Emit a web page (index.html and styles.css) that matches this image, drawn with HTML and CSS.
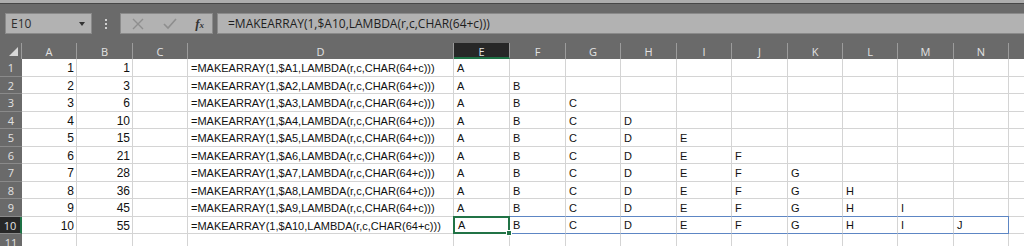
FILE: index.html
```html
<!DOCTYPE html>
<html lang="en">
<head>
  <meta charset="UTF-8" />
  <title>MAKEARRAY sheet</title>
  <link rel="stylesheet" href="styles.css">
</head>
<body>
  <div class="top-strip"></div>
  <div class="formula-bar">
    <div class="name-box">
      <span>E10</span>
      <span class="caret"></span>
    </div>
    <div class="grip"><i></i><i></i><i></i></div>
    <div class="fx-box">
      <svg class="fx-icon" width="14" height="14" viewBox="0 0 14 14">
        <path d="M2 2 L12 12 M12 2 L2 12" stroke="#8e8e8e" stroke-width="1.4" fill="none"/>
      </svg>
      <svg class="fx-icon" width="16" height="14" viewBox="0 0 16 14">
        <path d="M2 7 L6 11 L14 2" stroke="#8e8e8e" stroke-width="1.6" fill="none"/>
      </svg>
      <span class="fx">f<sub>x</sub></span>
    </div>
    <div class="formula-input">=MAKEARRAY(1,$A10,LAMBDA(r,c,CHAR(64+c)))</div>
  </div>
  <div class="sheet" id="sheet"></div>
  <script>
    const sheet = document.getElementById('sheet');
    const cols = ['A', 'B', 'C', 'D', 'E', 'F', 'G', 'H', 'I', 'J', 'K', 'L', 'M', 'N', 'O'];

    function cell(cls, text) {
      const div = document.createElement('div');
      div.className = cls;
      if (text !== undefined) div.textContent = text;
      sheet.appendChild(div);
      return div;
    }

    cell('corner').innerHTML = '<span class="tri"></span>';
    cols.forEach(c => cell(c === 'E' ? 'col-head active' : 'col-head', c === 'O' ? '' : c));

    for (let r = 1; r <= 11; r++) {
      cell(r === 10 ? 'row-head active' : 'row-head', r);
      const total = r * (r + 1) / 2;
      cols.forEach((c, i) => {
        let text = '';
        let cls = 'cell';
        if (r <= 10) {
          if (c === 'A') { text = r; cls += ' num'; }
          if (c === 'B') { text = total; cls += ' num'; }
          if (c === 'D') text = '=MAKEARRAY(1,$A' + r + ',LAMBDA(r,c,CHAR(64+c)))';
          if (i >= 4 && i - 4 < r) text = String.fromCharCode(65 + i - 4);
        }
        if (r === 10 && i >= 5 && i <= 13) cls += ' in-range';
        if (r === 10 && i === 13) cls += ' last';
        const div = cell(cls, text);
        if (r === 10 && c === 'E') {
          div.classList.add('selected');
          div.innerHTML = 'A<span class="handle"></span>';
        }
      });
    }
  </script>
</body>
</html>
```

FILE: styles.css
```css
* {
  margin: 0;
  padding: 0;
  box-sizing: border-box;
}
body {
  background: #6a6a6a;
  font-family: 'Open Sans', sans-serif;
  width: 1024px;
  height: 246px;
  overflow: hidden;
}
.top-strip {
  height: 4px;
  background: #adadad;
  border-bottom: 1px solid #474747;
}
.formula-bar {
  display: flex;
  align-items: center;
  height: 39px;
  padding: 0 0 0 5px;
}
.name-box {
  width: 87px;
  height: 21px;
  background: #b2b2b2;
  border: 1px solid #8a8a8a;
  display: flex;
  align-items: center;
  justify-content: space-between;
  padding: 0 5px 0 5px;
  font-size: 12px;
  color: #2e2e2e;
}
.caret {
  width: 0;
  height: 0;
  border-left: 3.5px solid transparent;
  border-right: 3.5px solid transparent;
  border-top: 4px solid #333;
  margin-right: 1px;
}
.grip {
  width: 28px;
  display: flex;
  flex-direction: column;
  align-items: center;
  gap: 2px;
}
.grip i {
  width: 2px;
  height: 2px;
  background: #d0d0d0;
}
.fx-box {
  width: 93px;
  height: 21px;
  background: #b2b2b2;
  border: 1px solid #8a8a8a;
  display: flex;
  align-items: center;
  justify-content: space-between;
  padding: 0 8px 0 10px;
}
.fx {
  font-family: 'Liberation Serif', serif;
  font-style: italic;
  font-weight: bold;
  font-size: 13px;
  color: #333;
}
.fx sub {
  font-size: 9px;
  vertical-align: 0;
}
.formula-input {
  flex: 1;
  height: 21px;
  margin-left: 4px;
  background: #b2b2b2;
  border: 1px solid #8a8a8a;
  border-right: none;
  font-size: 12px;
  line-height: 19px;
  padding-left: 10px;
  color: #1e1e1e;
}
.sheet {
  display: grid;
  grid-template-columns: 22px 55px 56px 55px 266px 56px 56px 55px 56px 55px 56px 55px 55px 56px 55px 40px;
  grid-template-rows: 16px 18px 17px 18px 17px 18px 17px 18px 17px 18px 17px 18px;
  background: #fff;
}
.corner,
.col-head,
.row-head {
  background: #6a6a6a;
  color: #e2e2e2;
  font-size: 11px;
  display: flex;
  align-items: center;
  justify-content: center;
}
.corner {
  position: relative;
  border-right: 1px solid #9c9c9c;
}
.tri {
  position: absolute;
  right: 3px;
  bottom: 3px;
  width: 0;
  height: 0;
  border-left: 9px solid transparent;
  border-bottom: 9px solid #d8d8d8;
}
.col-head {
  border-right: 1px solid #9c9c9c;
  padding-top: 1px;
}
.col-head.active {
  background: #272727;
  border-bottom: 2px solid #1e7145;
  padding-top: 2px;
}
.row-head {
  border-bottom: 1px solid #8a8a8a;
}
.row-head.active {
  background: #272727;
  border-right: 2px solid #1e7145;
}
.cell {
  border-right: 1px solid #d4d4d4;
  border-bottom: 1px solid #d4d4d4;
  font-family: 'Liberation Sans', sans-serif;
  font-size: 11px;
  color: #111;
  padding: 0 2px 0 3px;
  white-space: nowrap;
  overflow: hidden;
  line-height: 18px;
}
.cell.num {
  text-align: right;
  font-size: 12px;
}
.cell.in-range {
  border-top: 1px solid #5d86c4;
  border-bottom: 1px solid #5d86c4;
  margin-top: -1px;
  line-height: 17px;
}
.cell.last {
  border-right: 1px solid #5d86c4;
}
.cell.selected {
  position: relative;
  overflow: visible;
  border: 2px solid #217346;
  margin: -1px 0 0 -1px;
  padding-left: 3px;
  line-height: 15px;
}
.handle {
  position: absolute;
  right: -4px;
  bottom: -4px;
  width: 6px;
  height: 6px;
  background: #217346;
  border: 1px solid #fff;
}
```
